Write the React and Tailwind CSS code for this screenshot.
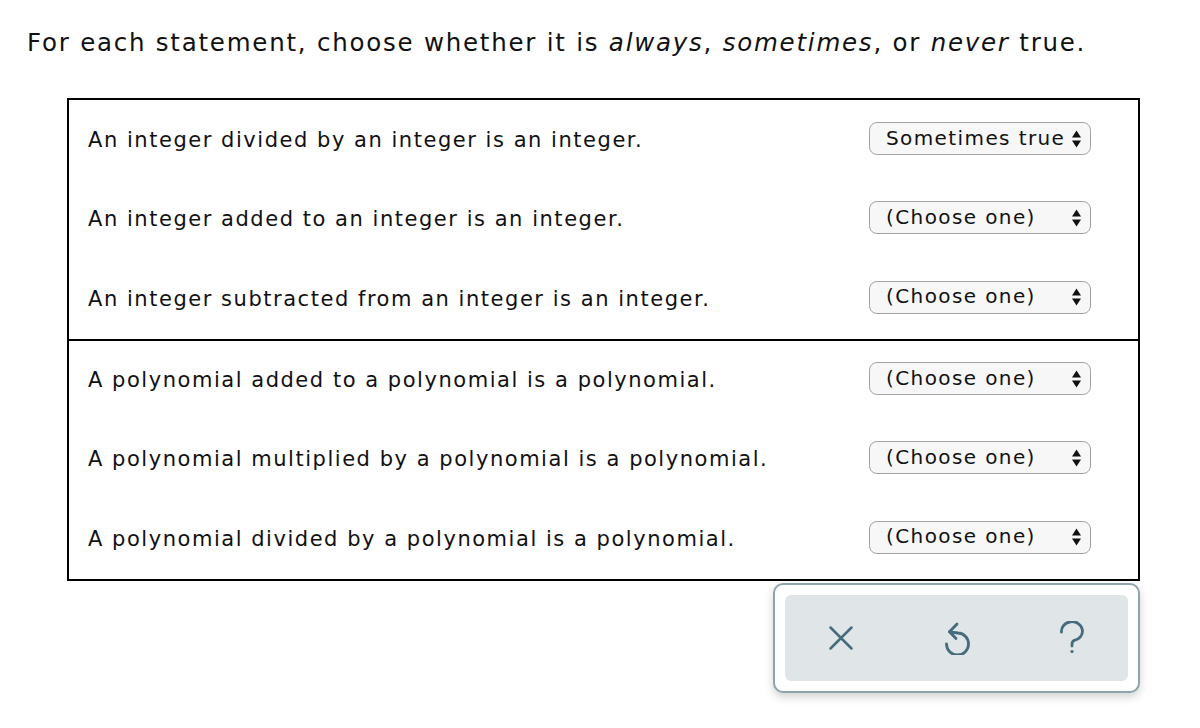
import React from "react";

const rows1 = [
  ["An integer divided by an integer is an integer.", "Sometimes true"],
  ["An integer added to an integer is an integer.", "(Choose one)"],
  ["An integer subtracted from an integer is an integer.", "(Choose one)"],
];
const rows2 = [
  ["A polynomial added to a polynomial is a polynomial.", "(Choose one)"],
  ["A polynomial multiplied by a polynomial is a polynomial.", "(Choose one)"],
  ["A polynomial divided by a polynomial is a polynomial.", "(Choose one)"],
];

function Arrows() {
  return (
    <svg width="11" height="20" viewBox="0 0 11 20" className="shrink-0">
      <path d="M5.5 1.5 L10 8.5 L1 8.5 Z" fill="#111" />
      <path d="M5.5 18.5 L10 11.5 L1 11.5 Z" fill="#111" />
    </svg>
  );
}

function Select({ value }) {
  return (
    <div className="w-[222px] h-[33px] rounded-[8px] border border-[#a3a3a3] bg-[#f7f7f7] flex items-center pl-[16px] pr-[8px] text-[20px] tracking-[0.07em] text-[#111]">
      <span className="flex-1 whitespace-nowrap -mt-[2px]">{value}</span>
      <Arrows />
    </div>
  );
}

function Row({ text, value }) {
  return (
    <div className="flex-1 flex items-center pl-[19px] pr-[47px]">
      <span className="flex-1 text-[21px] tracking-[0.073em] text-[#111]">{text}</span>
      <div className="-mt-[4px]">
        <Select value={value} />
      </div>
    </div>
  );
}

export default function App() {
  return (
    <div
      className="w-[1200px] h-[728px] bg-white"
      style={{ fontFamily: '"DejaVu Sans", Verdana, sans-serif' }}
    >
      <div className="pl-[27px] pt-[25px] text-[24.5px] tracking-[0.072em] text-[#111] leading-[36px]">
        For each statement, choose whether it is <i>always</i>, <i>sometimes</i>, or <i>never</i> true.
      </div>
      <div className="ml-[67px] mt-[37px] w-[1073px] border-2 border-black flex flex-col">
        <div className="h-[239px] flex flex-col pt-[1px]">
          {rows1.map((r, i) => (
            <Row key={i} text={r[0]} value={r[1]} />
          ))}
        </div>
        <div className="h-[2px] bg-black" />
        <div className="h-[238px] flex flex-col">
          {rows2.map((r, i) => (
            <Row key={i} text={r[0]} value={r[1]} />
          ))}
        </div>
      </div>
      <div className="ml-[773px] mt-[2px] w-[367px] h-[110px] rounded-[10px] border-2 border-[#8ea4ad] bg-white p-[10px] shadow-[0_4px_10px_rgba(0,0,0,0.18)]">
        <div className="h-full rounded-[6px] bg-[#e0e5e8] flex items-center justify-between px-[41px]">
          <svg width="30" height="30" viewBox="0 0 30 30" fill="none" stroke="#456b7c" strokeWidth="2.5" strokeLinecap="round">
            <path d="M4.5 4.5 L25.5 25.5 M25.5 4.5 L4.5 25.5" />
          </svg>
          <svg width="30" height="34" viewBox="0 0 30 34" fill="none" stroke="#456b7c" strokeWidth="2.8" strokeLinecap="round" strokeLinejoin="round">
            <path d="M4.5 23 A11 11 0 1 0 16 12 L7.5 10.8" />
            <path d="M15 3 L7.5 10.8 L14 17.5" />
          </svg>
          <svg width="30" height="34" viewBox="0 0 30 34" fill="none" stroke="#456b7c" strokeWidth="2.8" strokeLinecap="round">
            <path d="M4.5 11 A10.5 9.5 0 1 1 17 19.5 Q15 20.5 15 23.5 L15 25" />
            <circle cx="15" cy="30.5" r="1.6" fill="#456b7c" stroke="none" />
          </svg>
        </div>
      </div>
    </div>
  );
}
